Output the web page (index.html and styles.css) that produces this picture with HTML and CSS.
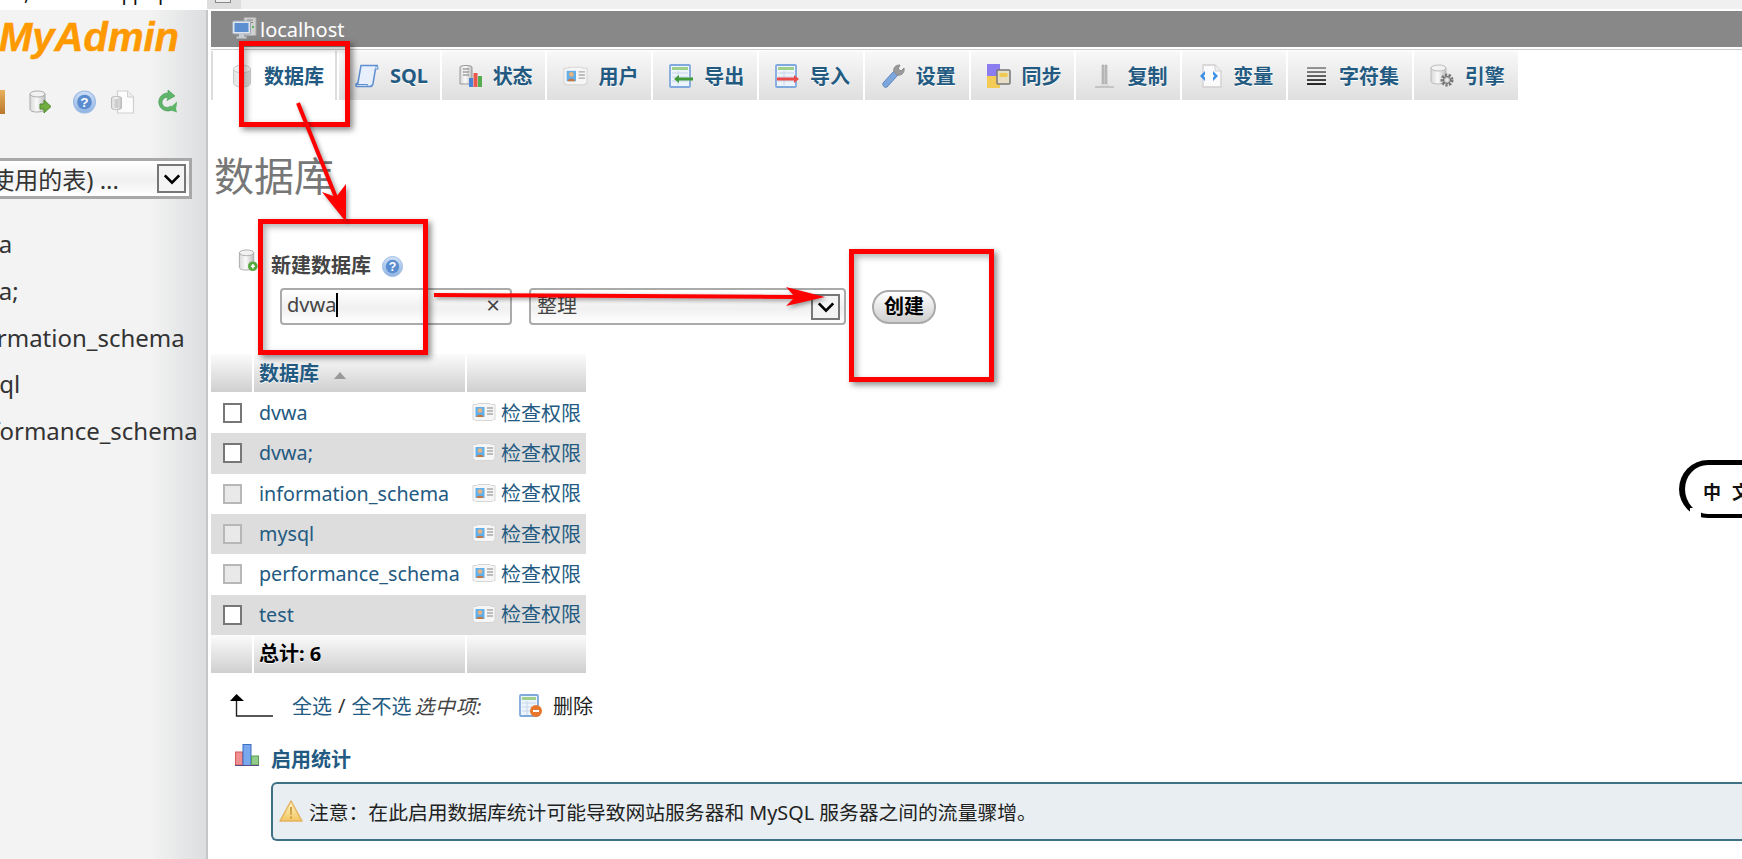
FILE: index.html
```html
<!DOCTYPE html>
<html lang="zh">
<head>
<meta charset="utf-8">
<title>phpMyAdmin</title>
<link rel="stylesheet" href="styles.css">
</head>
<body>
<svg class="defs" width="0" height="0" aria-hidden="true">
  <defs>
    <linearGradient id="gDb" x1="0" x2="1" y1="0" y2="0"><stop offset="0" stop-color="#d8d8d8"/><stop offset=".45" stop-color="#fafafa"/><stop offset="1" stop-color="#bdbdbd"/></linearGradient>
    <linearGradient id="gBlue" x1="0" x2="0" y1="0" y2="1"><stop offset="0" stop-color="#cfe0f7"/><stop offset="1" stop-color="#8fb3e2"/></linearGradient>
    <linearGradient id="gGold" x1="0" x2="0" y1="0" y2="1"><stop offset="0" stop-color="#fff6cf"/><stop offset="1" stop-color="#f2c65e"/></linearGradient>
    <linearGradient id="gLines" x1="0" x2="0" y1="0" y2="1"><stop offset="0" stop-color="#999"/><stop offset="1" stop-color="#222"/></linearGradient>
    <symbol id="i-server" viewBox="0 0 25 22">
      <rect x="12" y="0.5" width="12" height="18" rx="1" fill="#d0d0d0" stroke="#a8a8a8"/>
      <path d="M15 3h6M15 5.500h6" stroke="#888"/>
      <rect x="20" y="9" width="2" height="2" fill="#5cb85c"/>
      <rect x="0.5" y="4" width="18" height="13" rx="1.5" fill="#dfe6ee" stroke="#9aa6b4"/>
      <rect x="2.5" y="6" width="14" height="9" fill="#5b8fd0"/>
      <path d="M7 17h5v2.500h2.500V21.500h-10V19.500H7z" fill="#c6ccd3"/>
    </symbol>
    <symbol id="i-db" viewBox="0 0 20 24">
      <path d="M1.500 5v14c0 2.500 3.800 4 8.500 4s8.500-1.500 8.500-4V5z" fill="url(#gDb)" stroke="#b8b8b8"/>
      <ellipse cx="10" cy="5" rx="8.500" ry="3.800" fill="#f2f2f2" stroke="#b8b8b8"/>
      <rect x="7" y="9" width="6" height="11" fill="#cfcfcf"/>
    </symbol>
    <symbol id="i-sql" viewBox="0 0 25 24">
      <path d="M6 1.500h17c-2 .5-2.500 2-2.500 3.500L18 19.500c-.4 2-1.500 3-3 3H2c-1.200 0-1.500-1.500-.5-3h1.300z" fill="#e6effb" stroke="#5f8fd0" stroke-width="1.500"/>
      <path d="M20.500 2c1.800 0 2.800 1 2.500 3l-2.800.3" fill="#cfe0f7" stroke="#5f8fd0"/>
      <path d="M1.500 20.500h11c0 1 .3 1.500 1 2" fill="none" stroke="#5f8fd0"/>
    </symbol>
    <symbol id="i-status" viewBox="0 0 25 24">
      <path d="M2 3c0-2 12-2 12 0v17H2z" fill="url(#gDb)" stroke="#999"/>
      <path d="M5 5h6M5 8h6M5 11h6" stroke="#777" stroke-width="1.200"/>
      <rect x="11" y="14" width="4" height="9" fill="#4a82d6"/>
      <rect x="15.500" y="9" width="4" height="14" fill="#e8584f"/>
      <rect x="20" y="12" width="4" height="11" fill="#55ad4e"/>
    </symbol>
    <symbol id="i-card" viewBox="0 0 24 22">
      <path d="M1 3.500h4l1-1h12l1 1h4v15h-1.500l-1 1H3.500l-1-1H1z" fill="#f6f6f6" stroke="#d6d6d6"/>
      <rect x="3.500" y="6" width="9" height="10" fill="#62aee8"/>
      <circle cx="8" cy="9.500" r="2.300" fill="#e6b27e"/>
      <path d="M4.500 16c0-3 7-3 7 0z" fill="#c8763e"/>
      <path d="M15 7h6M15 10h6M15 13h6" stroke="#a9a9a9" stroke-width="1.300"/>
    </symbol>
    <symbol id="i-export" viewBox="0 0 25 24">
      <rect x="1" y="1" width="20" height="22" rx="1" fill="#eef4fc" stroke="#7fa8dc" stroke-width="1.800"/>
      <rect x="3" y="3" width="16" height="3" fill="#9fcf8c"/>
      <path d="M3 9h16M3 13h16M3 17h16M9 7v14" stroke="#c6d5e8"/>
      <path d="M5 15l5-4v2.500h14v3H10v2.500z" fill="#3f9a3a"/>
    </symbol>
    <symbol id="i-import" viewBox="0 0 25 24">
      <rect x="1" y="1" width="20" height="22" rx="1" fill="#eef4fc" stroke="#7fa8dc" stroke-width="1.800"/>
      <rect x="3" y="3" width="16" height="3" fill="#9fcf8c"/>
      <path d="M3 9h16M3 13h16M3 17h16M9 7v14" stroke="#c6d5e8"/>
      <path d="M24 15l-5-4v2.500H2v3h17v2.500z" fill="#ec4a4a"/>
    </symbol>
    <symbol id="i-wrench" viewBox="0 0 25 24">
      <path d="M2 19L13 7l4 4L6 23c-2 1.500-5-1.500-4-4z" fill="#7da7dc" stroke="#5d87bd"/>
      <path d="M13 8c-1-4 1-7 6-7l-2 4 3 2 3-3c1 5-3 8-7 7z" fill="#9a9a9a" stroke="#8a8a8a"/>
    </symbol>
    <symbol id="i-sync" viewBox="0 0 25 24">
      <rect x="0" y="0" width="13" height="12" fill="#8b7cf0"/>
      <rect x="0" y="12" width="13" height="12" fill="#f4cc55"/>
      <rect x="10" y="6" width="13" height="14" rx="1" fill="#e6dfc6" stroke="#777" stroke-width="1.500"/>
      <rect x="12.500" y="9" width="8" height="4" fill="#f0c94f"/>
    </symbol>
    <symbol id="i-repl" viewBox="0 0 25 24">
      <path d="M10 1h2v19h-2zM13 1h2v19h-2z" fill="#bdbdbd" stroke="#aaa" stroke-width=".6"/>
      <path d="M3 22h19v2H3z" fill="#c4c4c4"/>
      <path d="M8 20h9v2H8z" fill="#ddd"/>
    </symbol>
    <symbol id="i-vars" viewBox="0 0 25 24">
      <path d="M5 1h12l6 6v16H5z" fill="#fbfbfb" stroke="#d0d0d0" stroke-width="1.300"/>
      <path d="M17 1v6h6" fill="#eee" stroke="#d0d0d0"/>
      <path d="M7 7l-5 5 5 5v-3.500L5.500 12 7 10.500zM15 7l5 5-5 5v-3.500l1.500-1.500-1.500-1.500z" fill="#3c8fe6"/>
    </symbol>
    <symbol id="i-lines" viewBox="0 0 25 24">
      <path d="M3 3h19v2H3zM3 7h19v2H3zM3 11h19v2H3zM3 15h19v2H3zM3 19h19v2H3z" fill="url(#gLines)"/>
    </symbol>
    <symbol id="i-engine" viewBox="0 0 25 24">
      <path d="M1 4v13c0 2 3 3 7 3s8-1 8-3V4z" fill="url(#gDb)" stroke="#bbb"/>
      <ellipse cx="8.500" cy="4" rx="7.500" ry="3" fill="#f2f2f2" stroke="#bbb"/>
      <circle cx="17" cy="16" r="5" fill="none" stroke="#777" stroke-width="3" stroke-dasharray="2.200 1.300"/>
      <circle cx="17" cy="16" r="3.500" fill="#ccc" stroke="#666"/>
      <circle cx="17" cy="16" r="1.500" fill="#eee"/>
    </symbol>
    <symbol id="i-dbnew" viewBox="0 0 20 24">
      <path d="M1 4v15c0 2 3 3 7 3s8-1 8-3V4z" fill="url(#gDb)" stroke="#aaa"/>
      <ellipse cx="8.500" cy="4" rx="7.500" ry="3" fill="#f2f2f2" stroke="#aaa"/>
      <circle cx="15" cy="18" r="5" fill="#58a83f"/>
      <path d="M13 17.200h1.300v-1.500h1.600v1.500h1.300v1.600h-1.300v1.500h-1.600v-1.500H13z" fill="#fff"/>
    </symbol>
    <symbol id="i-dbgo" viewBox="0 0 22 24">
      <path d="M1 4v15c0 2 3 3 7 3s8-1 8-3V4z" fill="url(#gDb)" stroke="#aaa"/>
      <ellipse cx="8.500" cy="4" rx="7.500" ry="3" fill="#f2f2f2" stroke="#aaa"/>
      <path d="M11 14h4v-4l7 6.500-7 6.500v-4h-4z" fill="#72ad3f" stroke="#4d8a2a"/>
    </symbol>
    <symbol id="i-help" viewBox="0 0 22 22">
      <circle cx="11" cy="11" r="10.500" fill="url(#gBlue)" stroke="#9dbbe3"/>
      <circle cx="11" cy="11" r="7" fill="#5a8ccf"/>
      <text x="11" y="15.500" text-anchor="middle" class="help-mark">?</text>
    </symbol>
    <symbol id="i-doc" viewBox="0 0 24 24">
      <path d="M7 1h10l6 6v16H7z" fill="#fcfcfc" stroke="#cfcfcf" stroke-width="1.200"/>
      <path d="M17 1v6h6" fill="#eee" stroke="#cfcfcf"/>
      <path d="M1 8c0-2 10-2 10 0v10c0 2-10 2-10 0z" fill="url(#gDb)" stroke="#bbb"/>
      <rect x="4" y="9" width="4" height="9" fill="#ccc"/>
    </symbol>
    <symbol id="i-reload" viewBox="0 0 20 24">
      <path d="M10 3a9 9 0 1 0 6 15.500l-3.500-2.500A5 5 0 1 1 10 7.500l-1 3 8-4.500L10 0z" fill="#5fb56a" stroke="#3f934d" stroke-width=".6"/>
      <path d="M14 16l5-4.500c0 4-1 7-1 7l1 4-6-2z" fill="#5fb56a"/>
    </symbol>
    <symbol id="i-drop" viewBox="0 0 23 23">
      <rect x="1" y="1" width="18" height="21" rx="1" fill="#eef4fc" stroke="#7fa8dc" stroke-width="1.800"/>
      <rect x="3" y="3" width="14" height="3" fill="#9fcf8c"/>
      <path d="M3 9h14M3 13h14M3 17h14M8 7v14" stroke="#c6d5e8"/>
      <circle cx="17" cy="17" r="6" fill="#e8772e"/>
      <rect x="14" y="16" width="6" height="2" fill="#fff"/>
    </symbol>
    <symbol id="i-chart" viewBox="0 0 24 22">
      <rect x="0.500" y="8" width="7" height="13" fill="#ef8f8f" stroke="#d65b5b"/>
      <rect x="8" y="0.500" width="8" height="21" fill="#7aa8ec" stroke="#3a6fc4"/>
      <rect x="16.500" y="12" width="7" height="9" fill="#93cb8a" stroke="#5d9e56"/>
      <path d="M0 21.500h24" stroke="#5a4a8a"/>
    </symbol>
    <symbol id="i-warn" viewBox="0 0 24 22">
      <path d="M12 1L23 21H1z" fill="url(#gGold)" stroke="#e3b261" stroke-width="1.500" stroke-linejoin="round"/>
      <path d="M11 7h2l-.3 8h-1.400zM11 16.500h2v2h-2z" fill="#c79b3c"/>
    </symbol>
    <symbol id="i-arrowL" viewBox="0 0 43 23">
      <path d="M6.500 6v16H43" fill="none" stroke="#222" stroke-width="1.400"/>
      <path d="M6.500 0L14 7H0z" fill="#000"/>
    </symbol>
  </defs>
</svg>

<div class="topstrip">
  <div class="topleft"><span class="clip clip-a">,</span><span class="clip clip-b">pp</span><span class="clip clip-c">p</span></div>
  <div class="toptab"><span class="toptab-box"></span></div>
</div>

<div class="frame">
  <aside class="sidebar">
    <div class="logo">MyAdmin</div>
    <div class="nav-icons">
      <span class="nav-orange"></span>
      <svg class="ni ni-dbgo"><use href="#i-dbgo"/></svg>
      <svg class="ni ni-help"><use href="#i-help"/></svg>
      <svg class="ni ni-doc"><use href="#i-doc"/></svg>
      <svg class="ni ni-reload"><use href="#i-reload"/></svg>
    </div>
    <div class="side-select">
      <span class="side-select-text">(正在使用的表) ...</span>
      <span class="dd-btn side-dd"><svg viewBox="0 0 24 20"><path d="M4 6l8 8 8-8" fill="none" stroke="#000" stroke-width="3"/></svg></span>
    </div>
    <ul class="side-list">
      <li>dvwa</li>
      <li>dvwa;</li>
      <li>information_schema</li>
      <li>mysql</li>
      <li>performance_schema</li>
    </ul>
  </aside>
  <div class="divider"></div>

  <main class="main">
    <div class="server-bar"><svg class="server-icon"><use href="#i-server"/></svg><span>localhost</span></div>
    <nav class="tabs">
      <a class="tab active"><svg class="tab-i tab-i-db"><use href="#i-db"/></svg>数据库</a>
      <a class="tab tab-sql"><svg class="tab-i"><use href="#i-sql"/></svg>SQL</a>
      <a class="tab"><svg class="tab-i"><use href="#i-status"/></svg>状态</a>
      <a class="tab"><svg class="tab-i"><use href="#i-card"/></svg>用户</a>
      <a class="tab"><svg class="tab-i"><use href="#i-export"/></svg>导出</a>
      <a class="tab"><svg class="tab-i"><use href="#i-import"/></svg>导入</a>
      <a class="tab"><svg class="tab-i"><use href="#i-wrench"/></svg>设置</a>
      <a class="tab"><svg class="tab-i"><use href="#i-sync"/></svg>同步</a>
      <a class="tab"><svg class="tab-i"><use href="#i-repl"/></svg>复制</a>
      <a class="tab"><svg class="tab-i"><use href="#i-vars"/></svg>变量</a>
      <a class="tab"><svg class="tab-i"><use href="#i-lines"/></svg>字符集</a>
      <a class="tab"><svg class="tab-i"><use href="#i-engine"/></svg>引擎</a>
    </nav>

    <h1 class="page-title">数据库</h1>

    <section class="create">
      <div class="create-label">
        <svg class="create-db"><use href="#i-dbnew"/></svg>
        <strong>新建数据库</strong>
        <svg class="create-help"><use href="#i-help"/></svg>
      </div>
      <div class="create-row">
        <div class="field field-name"><span>dvwa</span><i class="caret"></i><b class="clear">×</b></div>
        <div class="field field-coll"><span>整理</span><span class="dd-btn"><svg viewBox="0 0 24 20"><path d="M4 6l8 8 8-8" fill="none" stroke="#000" stroke-width="3"/></svg></span></div>
        <div class="go-btn">创建</div>
      </div>
    </section>

    <table class="db-table">
      <thead>
        <tr><th></th><th><a>数据库</a><span class="sort"></span></th><th></th></tr>
      </thead>
      <tbody>
        <tr><td><span class="cb"></span></td><td><a>dvwa</a></td><td><a class="priv"><svg><use href="#i-card"/></svg>检查权限</a></td></tr>
        <tr><td><span class="cb"></span></td><td><a>dvwa;</a></td><td><a class="priv"><svg><use href="#i-card"/></svg>检查权限</a></td></tr>
        <tr><td><span class="cb off"></span></td><td><a>information_schema</a></td><td><a class="priv"><svg><use href="#i-card"/></svg>检查权限</a></td></tr>
        <tr><td><span class="cb off"></span></td><td><a>mysql</a></td><td><a class="priv"><svg><use href="#i-card"/></svg>检查权限</a></td></tr>
        <tr><td><span class="cb off"></span></td><td><a>performance_schema</a></td><td><a class="priv"><svg><use href="#i-card"/></svg>检查权限</a></td></tr>
        <tr><td><span class="cb"></span></td><td><a>test</a></td><td><a class="priv"><svg><use href="#i-card"/></svg>检查权限</a></td></tr>
      </tbody>
      <tfoot>
        <tr><th></th><th>总计: 6</th><th></th></tr>
      </tfoot>
    </table>

    <div class="actions">
      <svg class="act-arrow"><use href="#i-arrowL"/></svg>
      <a>全选</a><span class="slash">/</span><a>全不选</a>
      <em>选中项:</em>
      <svg class="act-drop"><use href="#i-drop"/></svg>
      <span class="act-del">删除</span>
    </div>

    <div class="stats-head"><svg><use href="#i-chart"/></svg><a>启用统计</a></div>
    <div class="notice"><svg><use href="#i-warn"/></svg><span>注意：在此启用数据库统计可能导致网站服务器和 MySQL 服务器之间的流量骤增。</span></div>
  </main>
</div>

<div class="bubble"><span>中文</span></div>

<div class="mark mark-tab"></div>
<div class="mark mark-new"></div>
<div class="mark mark-go"></div>
<svg class="arrows" viewBox="0 0 1742 859">
  <path d="M298 103L339 205" class="shaft"/>
  <path d="M346 222L322 192 336 197 346 184z" class="head"/>
  <path d="M434 295L800 297" class="shaft"/>
  <path d="M825 297L786 287 795 297 786 306z" class="head"/>
</svg>
</body>
</html>
```

FILE: styles.css
```css
* { box-sizing: border-box; }
html, body { margin: 0; height: 859px; overflow: hidden; background: #fff; }
body {
  position: relative;
  font-family: "Noto Sans", "Noto Sans CJK SC", sans-serif;
  font-size: 20px;
  color: #333;
}
.defs { position: absolute; }
a { color: #235a81; text-decoration: none; }

/* top strip */
.topstrip { display: flex; height: 10px; }
.topleft { position: relative; width: 207px; height: 9px; overflow: hidden; background: #fff; display: flex; }
.clip { display: block; line-height: 20px; margin-top: -17px; color: #111; font-size: 20px; height: 24px; }
.clip-a { margin-left: 24px; }
.clip-b { margin-left: 92px; letter-spacing: -1px; }
.clip-c { margin-left: 14px; }
.toptab { width: 34px; height: 9px; background: #dedede; padding-left: 8px; }
.toptab-box { display: block; width: 16px; height: 3px; border: 1px solid #888; border-top: 0; background: #eee; }
.topstrip::after { content: ""; flex: 1; height: 9px; background: #f0f0f0; }

/* frame */
.frame { display: flex; height: 849px; }

/* sidebar */
.sidebar {
  width: 206px;
  flex: none;
  overflow: hidden;
  background: linear-gradient(to right, #f3f3f3 0, #f3f3f3 150px, #dcdedf 206px);
}
.divider { width: 2px; flex: none; background: #c4c7c8; }
.logo {
  margin: 5px 0 0 -1px;
  height: 45px;
  font: italic bold 40px/44px "Liberation Sans", sans-serif;
  -webkit-text-stroke: .5px #ff9900;
  color: #ff9900;
  white-space: nowrap;
}
.nav-icons { display: flex; align-items: flex-start; height: 24px; margin-top: 30px; }
.nav-orange { width: 5px; height: 24px; background: linear-gradient(#e9b15d, #b9772c); }
.ni { height: 24px; }
.ni-dbgo { width: 22px; margin-left: 24px; }
.ni-help { width: 23px; margin-left: 22px; }
.ni-doc { width: 25px; margin-left: 14px; }
.ni-reload { width: 20px; margin-left: 23px; }
.side-select {
  display: flex;
  align-items: center;
  width: 192px;
  height: 41px;
  margin-top: 44px;
  border: 3px solid #a8a8a8;
  border-left: 0;
  background: linear-gradient(#fff, #f0f0f0 55%, #fff);
  overflow: hidden;
}
.side-select-text { flex: none; margin-left: -65px; width: 190px; font-size: 24px; white-space: nowrap; color: #333; }
.dd-btn {
  flex: none;
  display: flex;
  align-items: center;
  justify-content: center;
  width: 29px;
  height: 26px;
  border: 2px solid #777;
  background: #f4f4f4;
}
.dd-btn svg { width: 22px; height: 18px; }
.side-dd { margin-left: auto; margin-right: 3px; height: 29px; }
.side-list {
  list-style: none;
  margin: 22px 0 0 -47px;
  padding: 0;
  font-size: 24px;
  line-height: 46.800px;
  white-space: nowrap;
  color: #333;
}

/* main */
.main { flex: 1; min-width: 0; margin-left: 3px; overflow: hidden; }
.server-bar {
  display: flex;
  align-items: center;
  height: 36px;
  margin-top: 1px;
  padding-left: 21px;
  background: #888;
  color: #fff;
  font-size: 20px;
}
.server-icon { width: 25px; height: 22px; margin-right: 3px; margin-top: -3px; }
.tabs {
  display: flex;
  gap: 2px;
  height: 51px;
  margin-top: 2px;
  padding-top: 1px;
  border-top: 1px solid #ccc;
}
.tab {
  display: flex;
  align-items: center;
  height: 49px;
  padding: 0 12.800px 0 16px;
  background: linear-gradient(#f8f8f8, #dfdfdf);
  font-weight: 700;
  font-size: 20px;
  color: #235a81;
  text-shadow: 0 1px 0 #fff;
  white-space: nowrap;
}
.tab.active { background: #fff; border-left: 2px solid #ddd; border-right: 2px solid #ddd; padding-left: 19px; padding-right: 11px; }
.tab-sql { padding-right: 11.600px; }
.tab-i { width: 25px; height: 24px; margin-right: 10px; flex: none; }
.tab-i-db { width: 20px; margin-right: 12px; opacity: .75; }

.page-title {
  margin: 53px 0 0 3px;
  height: 46px;
  font-size: 40px;
  line-height: 46px;
  font-weight: 400;
  color: #777;
}

.create { margin-top: 50px; }
.create-label { display: flex; align-items: flex-start; height: 39px; padding-left: 27px; }
.create-db { width: 20px; height: 23px; margin-right: 12px; }
.create-label strong { font-size: 20px; line-height: 30px; margin-top: 2px; margin-left: 1px; color: #444; }
.create-help { width: 21px; height: 21px; margin: 7px 0 0 11px; }
.create-row { display: flex; align-items: center; padding-left: 69px; height: 37px; }
.field {
  display: flex;
  align-items: center;
  height: 37px;
  padding-bottom: 4px;
  border: 2px solid #aaa;
  border-radius: 4px;
  background: linear-gradient(#fff, #f0f0f0 55%, #fff);
  color: #444;
}
.field-name { width: 232px; padding-left: 5px; }
.caret { width: 2px; height: 24px; background: #000; margin-left: 0; }
.clear { margin-left: auto; margin-right: 10px; font-weight: 400; font-size: 24px; line-height: 30px; color: #444; }
.field-coll { width: 317px; margin-left: 17px; padding-left: 6px; justify-content: space-between; padding-right: 4px; }
.field-coll .dd-btn { margin-top: 4px; }
.go-btn {
  width: 64px;
  height: 34px;
  margin-left: 26px;
  border: 2px solid #aaa;
  border-radius: 17px;
  background: linear-gradient(#fff, #cfcfcf);
  color: #000;
  font-weight: 700;
  line-height: 29px;
  text-align: center;
}

.db-table { margin-top: 29px; width: 375px; border-collapse: separate; border-spacing: 0; table-layout: fixed; }
.db-table th:nth-child(1), .db-table td:nth-child(1) { width: 43px; }
.db-table th:nth-child(2), .db-table td:nth-child(2) { width: 213px; }
.db-table th {
  height: 39px;
  padding: 0 0 2px 5px;
  border-right: 2px solid #fff;
  border-bottom: 1px solid #fff;
  background: linear-gradient(#fbfbfb, #cfcfcf);
  text-align: left;
  font-size: 20px;
  font-weight: 700;
  color: #000;
  text-shadow: 0 1px 0 #fff;
}
.db-table tfoot th { height: 38px; border-bottom: 0; }
.db-table th:last-child { border-right: 0; }
.db-table th a { color: #235a81; }
.sort { display: inline-block; width: 0; height: 0; margin-left: 15px; vertical-align: middle; border: 6px solid transparent; border-top: 0; border-bottom: 7px solid #999; }
.db-table td { height: 40.330px; padding: 0 0 1px 5px; white-space: nowrap; font-size: 19.700px; overflow: hidden; }
.db-table td:last-child { padding: 0 0 2px 5px; font-size: 20px; }
.db-table tbody tr:nth-child(even) td { background: #ddd; }
.db-table td:first-child { padding: 0 0 0 12px; }
.cb { display: block; width: 19px; height: 20px; border: 2px solid #777; background: #fff; }
.cb.off { border-color: #b7b7b7; background: #e9e9e9; }
.priv { display: flex; align-items: center; }
.priv svg { width: 24px; height: 22px; margin-right: 5px; flex: none; }

.actions { display: flex; align-items: center; height: 24px; margin-top: 21px; padding-left: 19px; color: #333; }
.act-arrow { width: 43px; height: 23px; margin-right: 19px; }
.slash { margin: 0 6px; }
.actions em { margin-left: 3px; letter-spacing: .6px; color: #444; }
.act-drop { width: 23px; height: 23px; margin-left: 37px; }
.act-del { margin-left: 11px; color: #222; }

.stats-head { display: flex; align-items: flex-start; height: 38px; margin-top: 26px; padding-left: 24px; font-weight: 700; }
.stats-head svg { width: 24px; height: 22px; margin-right: 12px; }
.stats-head a { line-height: 30px; margin-top: 1px; }
.notice {
  display: flex;
  align-items: center;
  width: 1480px;
  height: 59px;
  margin-left: 60px;
  padding-left: 6px;
  border: 2px solid #3f7184;
  border-right: 0;
  border-radius: 6px 0 0 6px;
  background: #e8eef1;
  font-size: 19.800px;
  color: #222;
}
.notice svg { width: 24px; height: 22px; margin-right: 6px; flex: none; }

/* floating input-method bubble */
.bubble {
  position: absolute;
  left: 1679px;
  top: 460px;
  width: 120px;
  height: 58px;
  padding: 12px 0 0 18px;
  border: solid #000;
  border-width: 5px 0 4px 6px;
  border-radius: 29px 0 0 29px;
  background: #fff;
  color: #111;
  font-size: 18px;
  font-weight: 700;
  line-height: 30px;
  letter-spacing: 11px;
  white-space: nowrap;
}
.bubble::after {
  content: "";
  position: absolute;
  left: 5px;
  bottom: -4px;
  width: 11px;
  height: 10px;
  background: #fff;
}

/* red annotations */
.mark {
  position: absolute;
  border: 5px solid #f00;
  box-shadow: 3px 3px 6px rgba(0, 0, 0, .45), inset 3px 3px 6px rgba(0, 0, 0, .3);
}
.mark-tab { left: 239px; top: 41px; width: 111px; height: 86px; }
.mark-new { left: 258px; top: 219px; width: 170px; height: 136px; }
.mark-go { left: 849px; top: 249px; width: 145px; height: 133px; }
.arrows { position: absolute; left: 0; top: 0; width: 1742px; height: 859px; pointer-events: none; filter: drop-shadow(2px 2px 2px rgba(0, 0, 0, .4)); }
.shaft { fill: none; stroke: #f00; stroke-width: 4; }
.head { fill: #f00; }
.help-mark { font: 700 13px "Liberation Sans", sans-serif; fill: #fff; }
```
